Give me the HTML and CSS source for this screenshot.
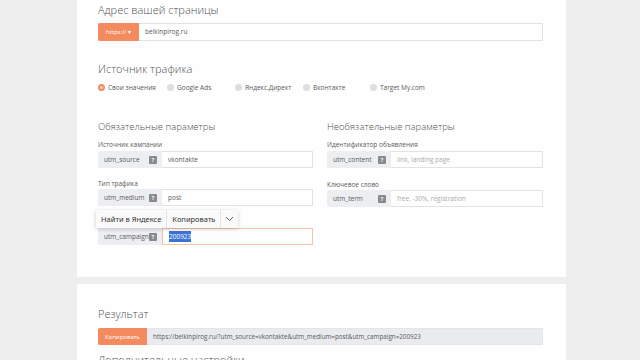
FILE: index.html
```html
<!DOCTYPE html>
<html lang="ru">
<head>
  <meta charset="UTF-8">
  <meta name="viewport" content="width=device-width, initial-scale=1.0">
  <title>Генератор UTM-меток</title>
  <link rel="stylesheet" href="styles.css">
</head>
<body>
  <div class="page">
    <div class="card first">
      <h2 class="title top">Адрес вашей страницы</h2>
      <div class="url-row">
        <button class="btn-orange proto">https:// &#9662;</button>
        <div class="field">belkinpirog.ru</div>
      </div>

      <h2 class="title source">Источник трафика</h2>
      <div class="radios">
        <label class="radio"><span class="dot checked"></span>Свои значения</label>
        <label class="radio"><span class="dot"></span>Google Ads</label>
        <label class="radio"><span class="dot"></span>Яндекс.Директ</label>
        <label class="radio"><span class="dot"></span>Вконтакте</label>
        <label class="radio"><span class="dot"></span>Target My.com</label>
      </div>

      <div class="columns">
        <div class="col">
          <h2 class="title small">Обязательные параметры</h2>
          <div class="group">
            <div class="label">Источник кампании</div>
            <div class="param">
              <div class="addon">utm_source<span class="help">?</span></div>
              <div class="value">vkontakte</div>
            </div>
          </div>
          <div class="group">
            <div class="label">Тип трафика</div>
            <div class="param">
              <div class="addon">utm_medium<span class="help">?</span></div>
              <div class="value">post</div>
            </div>
          </div>
          <div class="group">
            <div class="label"></div>
            <div class="param">
              <div class="addon">utm_campaign<span class="help">?</span></div>
              <div class="value focus"><span class="selected">200923</span></div>
            </div>
            <div class="ctx-menu">
              <span class="ctx-item">Найти в Яндексе</span>
              <span class="ctx-item">Копировать</span>
              <span class="ctx-item more">
                <svg width="9" height="6" viewBox="0 0 9 6"><path d="M1 1l3.5 3.5L8 1" fill="none" stroke="#555" stroke-width="0.9"/></svg>
              </span>
            </div>
          </div>
        </div>
        <div class="col">
          <h2 class="title small">Необязательные параметры</h2>
          <div class="group">
            <div class="label">Идентификатор объявления</div>
            <div class="param">
              <div class="addon">utm_content<span class="help">?</span></div>
              <div class="value placeholder">link, landing page</div>
            </div>
          </div>
          <div class="group">
            <div class="label">Ключевое слово</div>
            <div class="param">
              <div class="addon">utm_term<span class="help">?</span></div>
              <div class="value placeholder">free, -30%, registration</div>
            </div>
          </div>
        </div>
      </div>
    </div>

    <div class="card second">
      <h2 class="title">Результат</h2>
      <div class="url-row result">
        <button class="btn-orange copy">Копировать</button>
        <div class="field grey">https://belkinpirog.ru/?utm_source=vkontakte&amp;utm_medium=post&amp;utm_campaign=200923</div>
      </div>
      <h2 class="title extra">Дополнительные настройки</h2>
    </div>
  </div>
</body>
</html>
```

FILE: styles.css
```css
body {
  margin: 0;
  background-color: #eeeeee;
  font-family: "Open Sans", "Noto Sans", sans-serif;
  color: #555;
  overflow: hidden;
}

.page {
  margin-left: 77px;
  width: 489px;
}

.card {
  background-color: #fefefe;
  padding: 0 23px 0 21px;
}

.card.first {
  padding-top: 2px;
  padding-bottom: 32px;
}

.card.second {
  margin-top: 7px;
  padding-top: 22px;
  height: 100px;
}

.title {
  margin: 0;
  font-size: 11px;
  font-weight: 300;
  line-height: 16px;
  color: #505050;
}

.title.small {
  font-size: 9.5px;
}

.title.source {
  margin-top: 20px;
}

.title.extra {
  margin-top: 7px;
}

.url-row {
  display: flex;
  height: 18px;
  margin-top: 5px;
}

.url-row.result {
  margin-top: 6px;
  height: 17px;
}

.btn-orange {
  border: none;
  border-radius: 2px 0 0 2px;
  background-color: #f38b5f;
  color: #fff;
  font-family: inherit;
  font-size: 6px;
  padding: 0;
  cursor: pointer;
}

.proto {
  width: 41px;
}

.copy {
  width: 49px;
}

.field {
  flex: 1;
  border: 1px solid #e2e2e2;
  border-left: none;
  font-size: 6.5px;
  line-height: 16px;
  padding-left: 6px;
  color: #5a5a5a;
  white-space: nowrap;
  overflow: hidden;
}

.field.grey {
  background-color: #e9ebee;
  border-color: #e3e5e8;
  line-height: 15px;
  font-size: 6.3px;
}

.radios {
  display: grid;
  grid-template-columns: 69px 68px 68px 67px auto;
  margin-top: 5px;
  height: 10px;
}

.radio {
  display: flex;
  align-items: center;
  font-size: 6.5px;
  color: #5a5a5a;
}

.dot {
  width: 7px;
  height: 7px;
  border-radius: 50%;
  background-color: #dedede;
  margin-right: 3px;
  box-sizing: border-box;
}

.dot.checked {
  background-color: #fbd6c4;
  border: 2px solid #f38b5f;
}

.columns {
  display: grid;
  grid-template-columns: 215px 216px;
  column-gap: 14px;
  margin-top: 27px;
}

.group {
  position: relative;
}

.label {
  font-size: 6.5px;
  line-height: 10px;
  height: 10px;
  color: #5a5a5a;
  margin-top: 11px;
}

.title + .group .label {
  margin-top: 5px;
}

.group:last-child .label {
  margin-top: 12px;
}

.param {
  display: flex;
  height: 17px;
}

.title + .group .param {
  margin-top: 1px;
}

.addon {
  width: 64px;
  background-color: #eceef1;
  border-radius: 2px 0 0 2px;
  font-size: 6.5px;
  line-height: 17px;
  padding-left: 6px;
  box-sizing: border-box;
  color: #5a5a5a;
  position: relative;
}

.help {
  position: absolute;
  right: 5px;
  top: 5px;
  width: 8px;
  height: 8px;
  border-radius: 1px;
  background-color: #8a8a8a;
  color: #fff;
  font-size: 5px;
  line-height: 8px;
  text-align: center;
  font-weight: 700;
}

.value {
  flex: 1;
  border: 1px solid #e3e3e3;
  border-left: none;
  font-size: 6.5px;
  line-height: 15px;
  padding-left: 6px;
  color: #5a5a5a;
}

.value.placeholder {
  color: #aaa;
}

.value.focus {
  border: 1px solid #f7c4ab;
}

.selected {
  background-color: #3d72d6;
  color: #fff;
  padding: 1px 0;
}

.ctx-menu {
  position: absolute;
  left: -2px;
  top: -8px;
  height: 18px;
  display: flex;
  align-items: stretch;
  background-color: #fafafa;
  box-shadow: 0 1px 4px rgba(0, 0, 0, 0.2);
  font-family: "Noto Sans", "Open Sans", sans-serif;
  font-size: 7.5px;
  font-weight: 400;
  color: #333;
}

.ctx-item {
  display: flex;
  align-items: center;
  padding: 0 5px;
  border-right: 1px solid #e4e4e4;
}

.ctx-item.more {
  border-right: none;
  padding: 0 4px;
}
```
